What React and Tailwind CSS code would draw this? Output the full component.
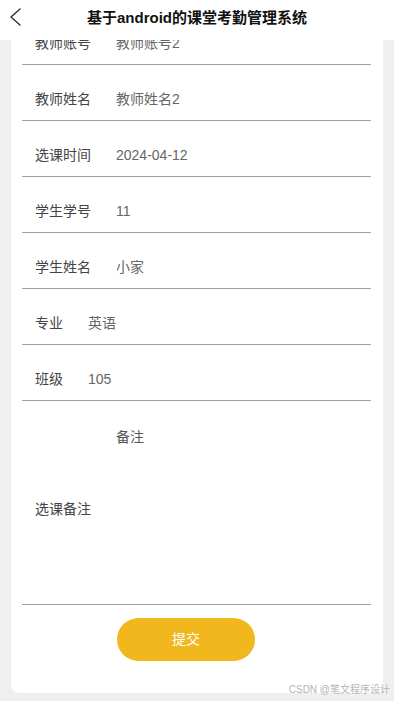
const fields = [
  { label: '教师账号', value: '教师账号2' },
  { label: '教师姓名', value: '教师姓名2' },
  { label: '选课时间', value: '2024-04-12' },
  { label: '学生学号', value: '11' },
  { label: '学生姓名', value: '小家' },
  { label: '专业', value: '英语' },
  { label: '班级', value: '105' },
];

const font = { fontFamily: '"Liberation Sans", "Noto Sans CJK SC", sans-serif' };

function FieldRow({ label, value }) {
  return (
    <div className="flex items-center h-14 pt-[13px] pl-[13px] border-b border-[#a0a0a0] box-border">
      <span className="text-[14px] leading-5 text-[#444] mr-[25px]">{label}</span>
      <span className="text-[14px] leading-5 text-[#666]">{value}</span>
    </div>
  );
}

export default function App() {
  return (
    <div className="relative flex flex-col h-[701px] w-full overflow-hidden bg-[#efefef]" style={font}>
      {/* header */}
      <div className="relative z-10 flex items-center justify-center h-10 shrink-0 bg-white">
        <svg className="absolute left-[8px] top-[7px]" width="14" height="20" viewBox="0 0 14 20" fill="none">
          <polyline points="12,2 3,10 12,18" stroke="#333" strokeWidth="1.5" strokeLinecap="round" strokeLinejoin="round" />
        </svg>
        <h1 className="text-[15px] font-bold text-[#111] leading-5 -mt-[5px]">基于android的课堂考勤管理系统</h1>
      </div>

      {/* scrolled body */}
      <div className="flex-1 overflow-hidden px-[11px]">
        <div className="-mt-[31px] bg-white rounded-b-lg pl-[11px] pr-[12px] pb-8">
          {fields.map((f) => (
            <FieldRow key={f.label} label={f.label} value={f.value} />
          ))}

          <div className="flex items-center h-[204px] pt-[13px] pl-[13px] border-b border-[#a0a0a0] box-border">
            <span className="text-[14px] leading-5 text-[#444] mr-[25px]">选课备注</span>
            <div className="self-start mt-[13px] text-[14px] leading-5 text-[#555]">备注</div>
          </div>

          <button className="mt-[13px] ml-[95px] w-[138px] h-[43px] rounded-full bg-[#f1b71d] text-white text-[14px]">
            提交
          </button>
        </div>
      </div>

      <div className="absolute right-[4px] bottom-[5px] text-[10px] leading-3 text-[#b5b5b5]">CSDN @笔文程序设计</div>
    </div>
  );
}
